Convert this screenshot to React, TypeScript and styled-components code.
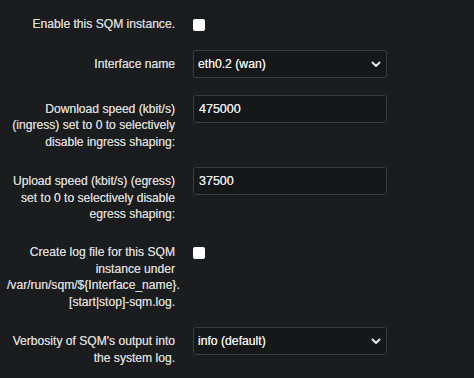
import styled, { createGlobalStyle } from "styled-components";

const GlobalStyle = createGlobalStyle`
	html, body {
		margin: 0;
		padding: 0;
		background: #1b1c1e;
	}

	body {
		font-family: "Liberation Sans", Arial, sans-serif;
		font-size: 12px;
		color: #d2d2d2;
		-webkit-font-smoothing: antialiased;
	}
`;

const Form = styled.div`
	width: 474px;
	height: 378px;
	padding-top: 10px;
	box-sizing: border-box;
	overflow: hidden;
	background: #1b1c1e;
`;

const Row = styled.div<{ $gap: number }>`
	display: grid;
	grid-template-columns: 168px 194px;
	column-gap: 18px;
	align-items: start;
	padding-left: 7px;
	margin-bottom: ${p => p.$gap}px;
`;

const Label = styled.label`
	padding-top: 5.75px;
	text-align: right;
	font-size: 12.1px;
	line-height: 16.5px;
	color: #d6d6d6;
	text-shadow: 0 0 0.4px #d6d6d6;
`;

const Field = styled.div`
	position: relative;
	height: 28px;
	display: flex;
	align-items: center;
`;

const Check = styled.span`
	display: block;
	width: 12px;
	height: 12px;
	border-radius: 2px;
	background: #ffffff;
	margin-top: 1px;
`;

const TextInput = styled.input`
	width: 100%;
	height: 28px;
	box-sizing: border-box;
	padding: 0 5px;
	border: 1px solid #3b3c3f;
	border-radius: 3px;
	background: #161719;
	color: #ececec;
	font-family: "Liberation Sans", Arial, sans-serif;
	font-size: 12.5px;
	text-shadow: 0 0 0.5px #ececec;
	outline: none;
`;

const Select = styled.select`
	appearance: none;
	width: 100%;
	height: 28px;
	box-sizing: border-box;
	padding: 0 20px 0 4px;
	border: 1px solid #3b3c3f;
	border-radius: 3px;
	background: #161719;
	color: #ececec;
	font-family: "Liberation Sans", Arial, sans-serif;
	font-size: 12.2px;
	text-shadow: 0 0 0.5px #ececec;
	outline: none;
`;

const Chevron = styled.svg`
	position: absolute;
	right: 6px;
	top: 11px;
	pointer-events: none;
`;

const ChevronIcon = () => (
	<Chevron width="10" height="7" viewBox="0 0 10 7">
		<path d="M1.5 1.5 L5 5 L8.5 1.5" fill="none" stroke="#e8e8e8" strokeWidth="2" strokeLinecap="round" strokeLinejoin="round" />
	</Chevron>
);

const logLabel = "Create log file for this SQM instance under /var/run/sqm/${Interface_name}.";

const App = () => {
	return (
		<>
			<GlobalStyle />
			<Form>
				<Row $gap={12}>
					<Label>Enable this SQM instance.</Label>
					<Field><Check /></Field>
				</Row>

				<Row $gap={17}>
					<Label>Interface name</Label>
					<Field>
						<Select defaultValue="eth0.2">
							<option value="eth0.2">eth0.2 (wan)</option>
						</Select>
						<ChevronIcon />
					</Field>
				</Row>

				<Row $gap={17}>
					<Label>Download speed (kbit/s) (ingress) set to 0 to selectively disable ingress shaping:</Label>
					<Field><TextInput defaultValue="475000" /></Field>
				</Row>

				<Row $gap={16}>
					<Label>Upload speed (kbit/s) (egress) set to 0 to selectively disable egress shaping:</Label>
					<Field><TextInput defaultValue="37500" /></Field>
				</Row>

				<Row $gap={17}>
					<Label>{logLabel} [start|stop]-sqm.log.</Label>
					<Field><Check /></Field>
				</Row>

				<Row $gap={0}>
					<Label>Verbosity of SQM's output into the system log.</Label>
					<Field>
						<Select defaultValue="info">
							<option value="info">info (default)</option>
						</Select>
						<ChevronIcon />
					</Field>
				</Row>
			</Form>
		</>
	);
};

export default App;
